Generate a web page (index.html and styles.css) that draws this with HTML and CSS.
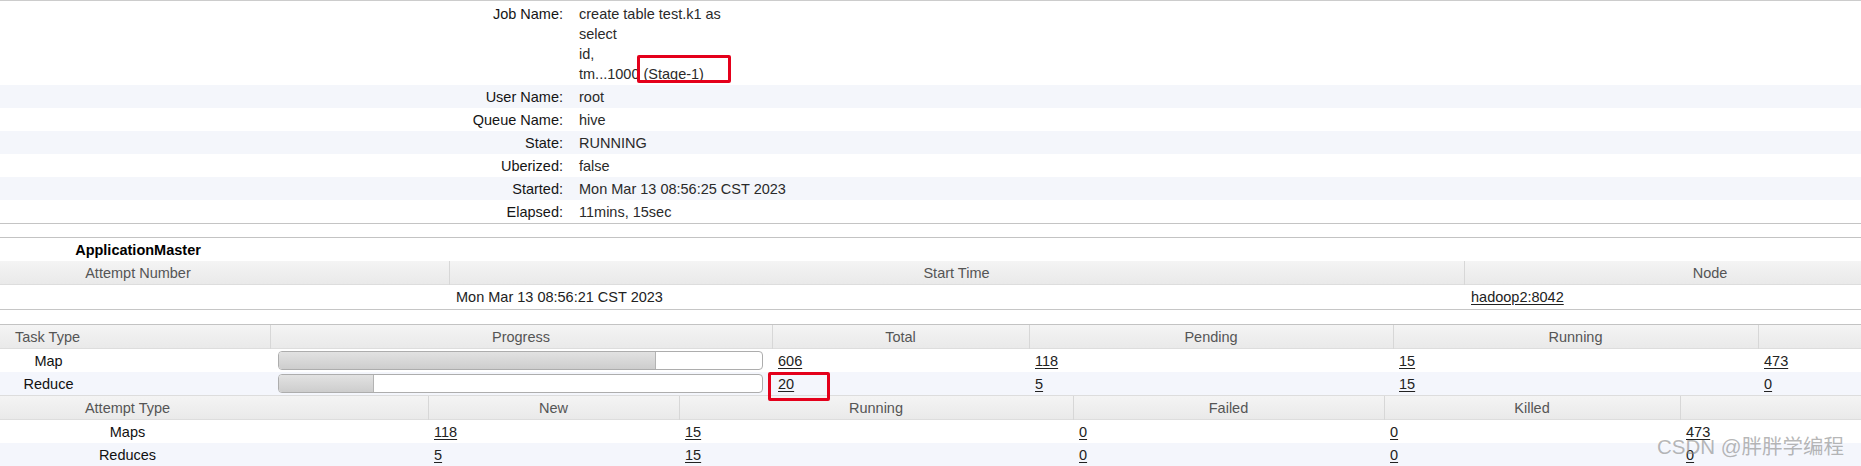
FILE: index.html
```html
<!DOCTYPE html>
<html lang="en">
<head>
<meta charset="utf-8">
<title>Job Overview</title>
<link rel="stylesheet" href="styles.css">
</head>
<body>
<div class="page">
  <table class="info">
    <tr class="job">
      <th>Job Name:</th>
      <td>create table test.k1 as<br>select<br>id,<br>tm...1000 (Stage-1)</td>
    </tr>
    <tr><th>User Name:</th><td>root</td></tr>
    <tr><th>Queue Name:</th><td>hive</td></tr>
    <tr><th>State:</th><td>RUNNING</td></tr>
    <tr><th>Uberized:</th><td>false</td></tr>
    <tr><th>Started:</th><td>Mon Mar 13 08:56:25 CST 2023</td></tr>
    <tr><th>Elapsed:</th><td>11mins, 15sec</td></tr>
  </table>

  <table class="grid am">
    <colgroup><col class="c-am1"><col class="c-am2"><col class="c-am3"></colgroup>
    <tr class="cap"><th class="first">ApplicationMaster</th><td></td><td></td></tr>
    <tr class="head"><th class="first">Attempt Number</th><th>Start Time</th><th>Node</th></tr>
    <tr class="row"><td class="first"></td><td class="val">Mon Mar 13 08:56:21 CST 2023</td><td class="val"><a href="#">hadoop2:8042</a></td></tr>
  </table>

  <table class="grid task">
    <colgroup><col class="c-t1"><col class="c-t2"><col class="c-t3"><col class="c-t4"><col class="c-t5"><col class="c-t6"></colgroup>
    <tr class="head"><th class="left">Task Type</th><th>Progress</th><th>Total</th><th>Pending</th><th>Running</th><th></th></tr>
    <tr class="row">
      <th class="first name">Map</th>
      <td class="prog"><div class="bar"><div class="fill" style="width:78.1%"></div></div></td>
      <td class="val"><a href="#">606</a></td>
      <td class="val"><a href="#">118</a></td>
      <td class="val"><a href="#">15</a></td>
      <td class="val"><a href="#">473</a></td>
    </tr>
    <tr class="row alt">
      <th class="first name">Reduce</th>
      <td class="prog"><div class="bar"><div class="fill" style="width:19.6%"></div></div></td>
      <td class="val"><a href="#">20</a></td>
      <td class="val"><a href="#">5</a></td>
      <td class="val"><a href="#">15</a></td>
      <td class="val"><a href="#">0</a></td>
    </tr>
  </table>

  <table class="grid attempt">
    <colgroup><col class="c-a1"><col class="c-a2"><col class="c-a3"><col class="c-a4"><col class="c-a5"><col class="c-a6"></colgroup>
    <tr class="head"><th class="first">Attempt Type</th><th>New</th><th>Running</th><th>Failed</th><th>Killed</th><th></th></tr>
    <tr class="row">
      <th class="first name">Maps</th>
      <td class="val"><a href="#">118</a></td>
      <td class="val"><a href="#">15</a></td>
      <td class="val"><a href="#">0</a></td>
      <td class="val"><a href="#">0</a></td>
      <td class="val"><a href="#">473</a></td>
    </tr>
    <tr class="row alt">
      <th class="first name">Reduces</th>
      <td class="val"><a href="#">5</a></td>
      <td class="val"><a href="#">15</a></td>
      <td class="val"><a href="#">0</a></td>
      <td class="val"><a href="#">0</a></td>
      <td class="val"><a href="#">0</a></td>
    </tr>
  </table>

  <div class="mark mark-stage"></div>
  <div class="mark mark-total"></div>
  <div class="watermark">CSDN @胖胖学编程</div>
</div>
</body>
</html>
```

FILE: styles.css
```css
html, body {
  margin: 0;
  padding: 0;
  background: #ffffff;
  overflow: hidden;
}

body {
  font-family: "Liberation Sans", Arial, "Noto Sans CJK SC", sans-serif;
  font-size: 14.5px;
  color: #222222;
}

.page {
  position: relative;
  width: 1861px;
  height: 466px;
  overflow: hidden;
}

table {
  border-collapse: separate;
  border-spacing: 0;
  table-layout: fixed;
}

th, td {
  padding: 0;
  font-weight: normal;
  line-height: 20px;
}

a {
  color: #222222;
  text-decoration: underline;
  text-underline-offset: 2px;
}

/* ---------- info block ---------- */
.info {
  width: 1861px;
  border-top: 1px solid #cccccc;
  border-bottom: 1px solid #c4c4c4;
}

.info tr {
  height: 23px;
}

.info tr:nth-child(even) {
  background: #f4f6fb;
}

.info th {
  width: 563px;
  padding-right: 2px;
  text-align: right;
  vertical-align: middle;
  color: #151515;
}

.info td {
  padding-left: 14px;
  vertical-align: middle;
  color: #2a2a2a;
}

.info tr.job th,
.info tr.job td {
  vertical-align: top;
  padding-top: 3px;
  padding-bottom: 1px;
}

/* ---------- grid tables ---------- */
.grid {
  border-top: 1px solid #c3c3c3;
}

.am {
  width: 1956px;
  margin-top: 13px;
  border-bottom: 1px solid #c6c6c6;
}

.task {
  width: 1861px;
  margin-top: 14px;
}

.attempt {
  width: 1861px;
  border-top: 1px solid #dddddd;
}

.c-am1 { width: 449px; }
.c-am2 { width: 1015px; }
.c-am3 { width: 492px; }

.c-t1 { width: 270px; }
.c-t2 { width: 502px; }
.c-t3 { width: 257px; }
.c-t4 { width: 364px; }
.c-t5 { width: 365px; }
.c-t6 { width: 103px; }

.c-a1 { width: 428px; }
.c-a2 { width: 251px; }
.c-a3 { width: 394px; }
.c-a4 { width: 311px; }
.c-a5 { width: 296px; }
.c-a6 { width: 181px; }

.grid tr.cap {
  height: 23px;
}

.grid tr.cap th {
  color: #000000;
  font-weight: bold;
}

.grid tr.head {
  height: 24px;
}

.grid tr.head th {
  background: linear-gradient(#f4f4f4, #e9e9e9);
  color: #555555;
  text-align: center;
  box-shadow: inset 1px 0 0 #d7d7d7, inset 0 -1px 0 #dddddd;
}

.grid tr.head th:first-child {
  box-shadow: inset 0 -1px 0 #dddddd;
}

.grid tr.head th.left {
  text-align: left;
  padding-left: 15px;
}

.grid tr.row {
  height: 23px;
}

.am tr.row {
  height: 24px;
}

.grid tr.alt {
  background: #f4f6fc;
}

.grid .first {
  text-align: center;
  padding-right: 173px;
}

.grid th.name {
  color: #111111;
}

.grid td.val {
  padding-left: 6px;
  text-align: left;
}

.am td.val {
  padding-left: 7px;
}

/* ---------- progress bar ---------- */
.grid td.prog {
  padding: 0 9px 0 8px;
  vertical-align: middle;
}

.bar {
  height: 19px;
  box-sizing: border-box;
  border: 1px solid #adadad;
  border-radius: 4px;
  background: #ffffff;
  overflow: hidden;
}

.fill {
  height: 100%;
  box-sizing: border-box;
  background: linear-gradient(#e2e2e2, #cdcdcd);
  border-right: 1px solid #b3b3b3;
}

/* ---------- annotations ---------- */
.mark {
  position: absolute;
  box-sizing: border-box;
  border: 3px solid #e4001b;
  border-radius: 2px;
}

.mark-stage {
  left: 637px;
  top: 55px;
  width: 94px;
  height: 28px;
}

.mark-total {
  left: 768px;
  top: 372px;
  width: 62px;
  height: 29px;
}

.watermark {
  position: absolute;
  left: 1657px;
  top: 435px;
  font-size: 20.5px;
  line-height: 24px;
  color: rgba(135, 135, 135, 0.6);
  white-space: nowrap;
}
```
